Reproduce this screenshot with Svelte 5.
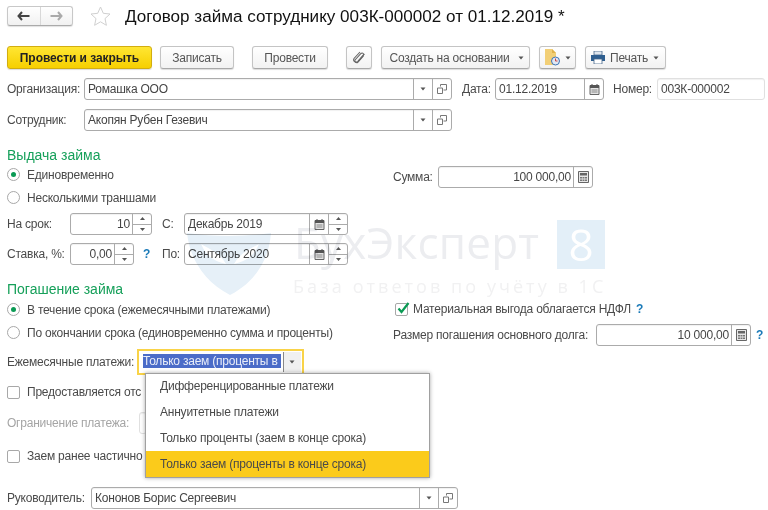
<script>
  const items = [
    'Дифференцированные платежи',
    'Аннуитетные платежи',
    'Только проценты (заем в конце срока)',
    'Только заем (проценты в конце срока)'
  ];
</script>

{#snippet caret()}
  <svg class="caret" width="7" height="4" viewBox="0 0 7 4"><path d="M0.5 0.5h5L3 3.5z" fill="#555"/></svg>
{/snippet}

{#snippet open()}
  <span class="cell open">
    <svg width="10" height="10" viewBox="0 0 10 10" fill="none" stroke="#777" stroke-width="1">
      <path d="M3.5 2.500v-2h6v5.500h-3"/><path d="M0.500 4h5v5.500h-5z"/>
    </svg>
  </span>
{/snippet}

{#snippet drop()}
  <span class="cell drop">{@render caret()}</span>
{/snippet}

{#snippet cal()}
  <span class="cell drop">
    <svg width="11" height="11" viewBox="0 0 11 11"><path d="M1 1.500h9v9H1z" fill="#e4e4e4" stroke="#666"/><path d="M1 1h9v3H1z" fill="#555"/><path d="M3 0v2M8 0v2" stroke="#555"/><path d="M2.500 5.500h6v1h-6zM2.500 7.500h6v1h-6z" fill="#888"/></svg>
  </span>
{/snippet}

{#snippet calc()}
  <span class="cell drop">
    <svg width="11" height="12" viewBox="0 0 11 12"><path d="M.5.500h10v11H.5z" fill="#e8e8e8" stroke="#666"/><path d="M2 2h7v2.500H2z" fill="#666"/><path d="M2 6h2v1.500H2zM4.500 6h2v1.500h-2zM7 6h2v1.500H7zM2 8.500h2V10H2zM4.500 8.500h2V10h-2zM7 8.500h2V10H7z" fill="#777"/></svg>
  </span>
{/snippet}

{#snippet spin()}
  <span class="spin">
    <span><svg width="5" height="3" viewBox="0 0 5 3"><path d="M2.500 0l2.500 3H0z" fill="#555"/></svg></span>
    <span><svg width="5" height="3" viewBox="0 0 5 3"><path d="M0 0h5L2.500 3z" fill="#555"/></svg></span>
  </span>
{/snippet}

<div class="page">
  <header class="head">
    <div class="nav">
      <span><svg width="13" height="10" viewBox="0 0 13 10"><path d="M5 1L1.500 5 5 9M1.500 5H12.500" fill="none" stroke="#444" stroke-width="2"/></svg></span>
      <span><svg width="13" height="10" viewBox="0 0 13 10"><path d="M8 1l3.500 4L8 9M11.500 5H.5" fill="none" stroke="#aaa" stroke-width="2"/></svg></span>
    </div>
    <svg class="star" width="21" height="20" viewBox="0 0 21 20"><path d="M10.500 1l2.800 6.300 6.700.7-5 4.600 1.400 6.700-5.900-3.500-5.900 3.500 1.400-6.700-5-4.600 6.700-.7z" fill="none" stroke="#d0d0d0"/></svg>
    <h1>Договор займа сотруднику 003К-000002 от 01.12.2019 *</h1>
  </header>

  <div class="toolbar">
    <button class="primary w145">Провести и закрыть</button>
    <button class="w74 ml8">Записать</button>
    <button class="w76 ml18">Провести</button>
    <button class="w26 ml18">
      <svg width="14" height="15" viewBox="0 0 14 15" fill="none" stroke="#666" stroke-width="1.100"><path d="M11.500 6L6 12c-1.500 1.500-4 0-3-2l6-6.500c1-1 3-.2 2.500 1.300L6 11"/><path d="M12.500 4l-6 7c-2 2.500-6 .2-4.500-2.500L8 2"/></svg>
    </button>
    <button class="w149 ml9 wide">Создать на основании {@render caret()}</button>
    <button class="w37 ml9">
      <svg width="16" height="17" viewBox="0 0 16 17"><path d="M1 0h7l4 4v12H1z" fill="#f2cf76"/><path d="M8 0l4 4H8z" fill="#e0b24c"/><circle cx="11.500" cy="12" r="4" fill="#dfe8f4" stroke="#3d73b5"/><path d="M11.500 9.500V12h2" stroke="#c44" fill="none"/></svg>
      {@render caret()}
    </button>
    <button class="w81 ml9">
      <svg width="14" height="13" viewBox="0 0 14 13"><path d="M3 0h8v4H3z" fill="#dfe6ee" stroke="#46688c" stroke-width=".8"/><path d="M0 4h14v6H0z" fill="#2f5f90"/><path d="M3 8h8v5H3z" fill="#fff" stroke="#46688c" stroke-width=".8"/></svg>
      Печать {@render caret()}
    </button>
  </div>

  <div class="row r1">
    <span class="lab l77">Организация:</span>
    <span class="field w368"><span class="val">Ромашка ООО</span>{@render drop()}{@render open()}</span>
    <span class="lab ml10 l33">Дата:</span>
    <span class="field w109"><span class="val">01.12.2019</span>{@render cal()}</span>
    <span class="lab ml9 l44">Номер:</span>
    <span class="field w108 light"><span class="val">003К-000002</span></span>
  </div>
  <div class="row r2">
    <span class="lab l77">Сотрудник:</span>
    <span class="field w368"><span class="val">Акопян Рубен Гезевич</span>{@render drop()}{@render open()}</span>
  </div>

  <h2 class="s1">Выдача займа</h2>
  <div class="cols">
    <div class="left">
      <label class="opt h23"><span class="radio on"></span>Единовременно</label>
      <label class="opt h23"><span class="radio"></span>Несколькими траншами</label>
      <div class="row t4">
        <span class="lab l63">На срок:</span>
        <span class="field w82"><span class="val right">10</span>{@render spin()}</span>
        <span class="lab ml10 l22">С:</span>
        <span class="field w164"><span class="val">Декабрь 2019</span>{@render cal()}{@render spin()}</span>
      </div>
      <div class="row t8">
        <span class="lab l63">Ставка, %:</span>
        <span class="field w64"><span class="val right">0,00</span>{@render spin()}</span>
        <span class="help q1">?</span>
        <span class="lab l22">По:</span>
        <span class="field w164"><span class="val">Сентябрь 2020</span>{@render cal()}{@render spin()}</span>
      </div>
    </div>
    <div class="rightcol p3">
      <div class="row">
        <span class="lab l45">Сумма:</span>
        <span class="field w155"><span class="val right">100 000,00</span>{@render calc()}</span>
      </div>
    </div>
  </div>

  <h2 class="s2">Погашение займа</h2>
  <div class="cols">
    <div class="left">
      <label class="opt h23"><span class="radio on"></span>В течение срока (ежемесячными платежами)</label>
      <label class="opt h23"><span class="radio"></span>По окончании срока (единовременно сумма и проценты)</label>
    </div>
    <div class="rightcol">
      <label class="opt h22 x2"><span class="check on"><svg width="14" height="13" viewBox="0 0 14 13"><path d="M2.500 6.500l3 3.500L12.500 1" fill="none" stroke="#0a9a54" stroke-width="2.200"/></svg></span>Материальная выгода облагается НДФЛ<span class="help q2">?</span></label>
      <div class="row t4">
        <span class="lab l203">Размер погашения основного долга:</span>
        <span class="field w155"><span class="val right">10 000,00</span>{@render calc()}</span>
        <span class="help q3">?</span>
      </div>
    </div>
  </div>

  <div class="row pay">
    <span class="lab l130">Ежемесячные платежи:</span>
    <span class="focus">
      <span class="sel"><span class="hl">Только заем (проценты в конце срока)</span></span>
      <span class="focusdrop">{@render caret()}</span>
    </span>
  </div>
  <label class="opt h22 t6"><span class="check"></span>Предоставляется отс</label>
  <div class="row t9">
    <span class="lab l132 muted">Ограничение платежа:</span>
    <span class="field w6 light"></span>
  </div>
  <label class="opt h22 t11"><span class="check"></span>Заем ранее частично</label>
  <div class="row t20">
    <span class="lab l84">Руководитель:</span>
    <span class="field w367"><span class="val">Кононов Борис Сергеевич</span>{@render drop()}{@render open()}</span>
  </div>

  <ul class="popup">
    {#each items as item, i}
      <li class:active={i === 3}>{item}</li>
    {/each}
  </ul>

  <div class="mark" aria-hidden="true">
    <svg class="shield" width="84" height="64" viewBox="0 0 84 64">
      <path d="M0 1 C28 5 56 5 84 1 C82 28 68 50 43 63 C18 50 3 28 0 1z" fill="#e6f0f8"/>
      <path d="M14 12 C24 18 32 20 39 32 C30 30 20 26 14 12z M72 12 C62 18 54 20 47 32 C56 30 66 26 72 12z" fill="#fff"/>
    </svg>
    <span class="brand">БухЭксперт</span>
    <span class="eight">8</span>
    <span class="tag">База ответов по учёту в 1С</span>
  </div>
</div>

<style>
  :global(body) { margin: 0; background: #fff; }
  .page {
    position: relative;
    width: 768px;
    height: 510px;
    overflow: hidden;
    padding: 5px 0 0 7px;
    box-sizing: border-box;
    font: 12px "Liberation Sans", Arial, sans-serif;
    letter-spacing: -.22px;
    color: #4a4a4a;
    background: #fff;
    filter: blur(.45px);
  }
  .head { display: flex; align-items: center; height: 21px; }
  .nav {
    display: flex; width: 66px; height: 20px; box-sizing: border-box;
    border: 1px solid #c8c8c8; border-bottom-color: #aaa; border-radius: 3px;
    background: linear-gradient(#fff, #f1f1f1);
    box-shadow: 0 1px 1px rgba(0,0,0,.12);
  }
  .nav span { flex: 1; display: flex; align-items: center; justify-content: center; }
  .nav span + span { border-left: 1px solid #d8d8d8; }
  .star { margin-left: 17px; }
  h1 { margin: 3px 0 0 14px; font-size: 17.100px; font-weight: 400; letter-spacing: 0; color: #111; white-space: nowrap; }

  .toolbar { display: flex; height: 23px; margin-top: 20px; }
  button {
    display: inline-flex; align-items: center; justify-content: center; gap: 5px;
    box-sizing: border-box; height: 23px; padding: 0;
    border: 1px solid #c4c4c4; border-bottom-color: #a8a8a8; border-radius: 3px;
    background: linear-gradient(#fff, #f2f2f2);
    box-shadow: 0 1px 1px rgba(0,0,0,.14);
    font: inherit; letter-spacing: inherit; color: #555; white-space: nowrap;
  }
  .wide { gap: 8px; padding-left: 3px; }
  .primary {
    background: linear-gradient(#ffe633, #f6cf00);
    border-color: #d2ad10; color: #222; font-weight: 700; letter-spacing: -.05px;
  }
  .w145 { width: 145px; } .w74 { width: 74px; } .w76 { width: 76px; }
  .w26 { width: 26px; } .w149 { width: 149px; } .w37 { width: 37px; } .w81 { width: 81px; }
  .ml8 { margin-left: 8px; } .ml9 { margin-left: 9px; } .ml10 { margin-left: 10px; } .ml18 { margin-left: 18px; }

  .row { display: flex; align-items: center; height: 22px; }
  .r1 { margin-top: 9px; }
  .r2 { margin-top: 9px; }
  .t4 { margin-top: 4px; }
  .t8 { margin-top: 8px; }
  .t9 { margin-top: 9px; }
  .t20 { margin-top: 20px; }
  .lab { white-space: nowrap; flex: none; }
  .muted { color: #a5a5a5; }
  .l77 { width: 77px; } .l33 { width: 33px; } .l44 { width: 44px; }
  .l63 { width: 63px; } .l22 { width: 22px; } .l45 { width: 45px; }
  .l203 { width: 203px; } .l130 { width: 130px; } .l132 { width: 132px; } .l84 { width: 84px; }

  .field {
    display: flex; flex: none; align-items: stretch; height: 22px; box-sizing: border-box;
    border: 1px solid #ababab; border-radius: 3px; background: #fff;
    box-shadow: inset 0 1px 1px rgba(0,0,0,.06);
  }
  .field.light { border-color: #e0e0e0; }
  .w368 { width: 368px; } .w367 { width: 367px; } .w109 { width: 109px; } .w108 { width: 108px; }
  .w82 { width: 82px; } .w64 { width: 64px; } .w164 { width: 164px; } .w155 { width: 155px; } .w6 { width: 8px; }
  .val { flex: 1; min-width: 0; padding: 0 3px; line-height: 20px; white-space: nowrap; overflow: hidden; color: #454545; }
  .val.right { text-align: right; padding-right: 2px; }
  .cell { flex: none; width: 19px; box-sizing: border-box; display: flex; align-items: center; justify-content: center; }
  .drop { border-left: 1px solid #ababab; }
  .open { border-left: 1px solid #ababab; }
  .spin { flex: none; width: 18px; display: flex; flex-direction: column; border-left: 1px solid #ababab; }
  .spin span { flex: 1; display: flex; align-items: center; justify-content: center; }
  .spin span + span { border-top: 1px solid #ababab; }
  .caret { flex: none; }

  h2 { margin: 0; height: 16px; font-size: 14px; line-height: 16px; font-weight: 400; letter-spacing: 0; color: #16a05a; }
  .s1 { margin-top: 16px; }
  .s2 { margin-top: 16px; margin-bottom: 1px; }
  .cols { display: flex; }
  .left { width: 386px; flex: none; }
  .rightcol { flex: 1; }
  .p3 { padding-top: 3px; }
  .opt { display: flex; align-items: center; white-space: nowrap; }
  .h23 { height: 23px; }
  .h22 { height: 22px; }
  .x2 { margin-left: 2px; }
  .t6 { margin-top: 6px; }
  .t11 { margin-top: 11px; }
  .radio {
    flex: none; width: 13px; height: 13px; box-sizing: border-box; margin-right: 7px;
    border: 1px solid #a8a8a8; border-radius: 50%; background: #fff;
    display: flex; align-items: center; justify-content: center;
  }
  .radio.on::after { content: ""; width: 5px; height: 5px; border-radius: 50%; background: #0a9a54; }
  .check {
    flex: none; width: 13px; height: 13px; box-sizing: border-box; margin-right: 7px;
    border: 1px solid #a8a8a8; border-radius: 2px; background: #fff; position: relative;
  }
  .check.on { margin-right: 5px; }
  .check svg { position: absolute; left: 0; top: -2px; }
  .help { color: #1a7ab8; font-weight: 700; font-size: 12px; }
  .q1 { width: 22px; margin-left: 6px; box-sizing: border-box; padding-left: 3px; }
  .q2 { margin-left: 5px; }
  .q3 { margin-left: 5px; }

  .pay { margin-top: 3px; height: 26px; }
  .focus {
    display: flex; align-items: stretch; width: 167px; height: 26px; box-sizing: border-box;
    border: 2px solid #f9d348; background: #fff;
  }
  .sel { width: 144px; flex: none; padding: 3px 0 3px 4px; box-sizing: border-box; white-space: nowrap; }
  .hl { background: #4b6cc8; color: #e9edf8; display: block; width: 138px; overflow: hidden; line-height: 14px; }
  .focusdrop { flex: 1; margin: 1px 1px 1px 0; background: #f0f0f0; border-left: 1px solid #888; display: flex; align-items: center; justify-content: center; }

  .popup {
    position: absolute; left: 145px; top: 373px; width: 285px; height: 105px; box-sizing: border-box;
    margin: 0; padding: 0; list-style: none; background: #fff;
    border: 1px solid #a0a0a0; box-shadow: 0 0 4px rgba(0,0,0,.35);
    display: flex; flex-direction: column; justify-content: flex-end;
  }
  .popup li { height: 26px; line-height: 26px; padding-left: 14px; color: #4a4a4a; white-space: nowrap; }
  .popup li.active { background: #fbcb1b; }

  .mark { position: absolute; inset: 0; pointer-events: none; mix-blend-mode: multiply; }
  .shield { position: absolute; left: 187px; top: 232px; }
  .brand { position: absolute; left: 294px; top: 217px; font: 400 44px/50px "Open Sans", sans-serif; color: #ecedf0; letter-spacing: .2px; }
  .eight { position: absolute; left: 557px; top: 220px; width: 48px; height: 49px; background: #e3eff8; color: #fff; font: 400 44px/49px "Open Sans", sans-serif; letter-spacing: 0; text-align: center; }
  .tag { position: absolute; left: 293px; top: 276px; font: 400 18px/20px "Open Sans", sans-serif; letter-spacing: 3.050px; color: #f1f1f2; white-space: nowrap; }
</style>
